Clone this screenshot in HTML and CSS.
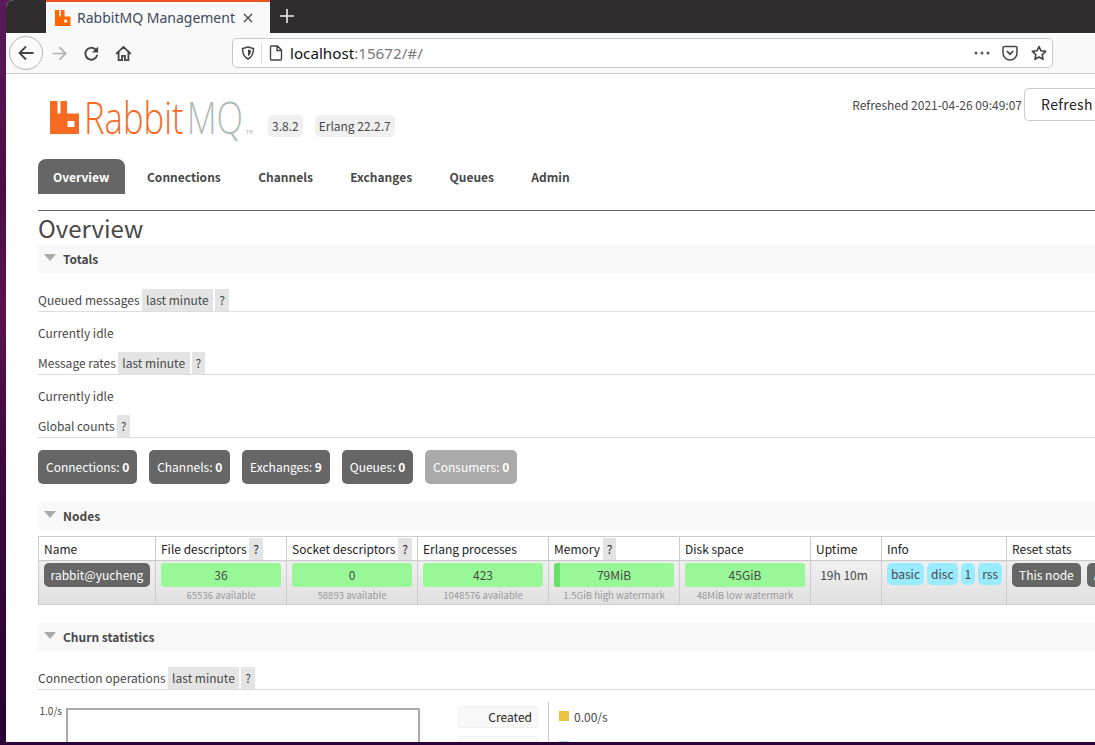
FILE: index.html
```html
<!DOCTYPE html>
<html lang="en">
<head>
<meta charset="utf-8">
<title>RabbitMQ Management</title>
<link rel="stylesheet" href="styles.css">
</head>
<body>
<div class="window">
  <div class="tabbar">
    <div class="tab">
      <svg class="tab-icon" viewBox="0 0 16 16"><path fill="#ff6600" d="M0 0h4.200v6.500h1.600V0H9.600v6.500H15.500V16H0z"/><rect fill="#fff" x="9.200" y="9.600" width="3" height="3" rx=".4"/></svg>
      <span class="tab-title">RabbitMQ Management</span>
      <svg class="tab-close" viewBox="0 0 10 10"><path d="M1 1l8 8M9 1l-8 8" stroke="#4a4a4f" stroke-width="1.400" fill="none"/></svg>
    </div>
    <svg class="tab-new" viewBox="0 0 14 14"><path d="M7 0v14M0 7h14" stroke="#eee" stroke-width="1.600" fill="none"/></svg>
  </div>
  <div class="toolbar">
    <div class="back"><svg viewBox="0 0 18 18"><path d="M16.500 9H2.500M9 2.500L2.500 9l6.500 6.500" stroke="#444" stroke-width="1.800" fill="none"/></svg></div>
    <svg class="tool fwd" viewBox="0 0 18 18"><path d="M1.500 9h14M9 2.500L15.500 9 9 15.500" stroke="#b1b1b3" stroke-width="1.800" fill="none"/></svg>
    <svg class="tool reload" viewBox="0 0 18 18"><path d="M15 10.500A6.300 6.300 0 1 1 13 4.500l2 2" stroke="#444" stroke-width="2" fill="none"/><path d="M16 1.500v6.500h-6.500z" fill="#444"/></svg>
    <svg class="tool home" viewBox="0 0 18 18"><path d="M1.200 9.500L9 2l7.800 7.500M3.800 7.500V16h3.700v-4.500h3V16h3.700V7.500" stroke="#444" stroke-width="1.900" fill="none"/></svg>
    <div class="urlbar">
      <svg class="shield" viewBox="0 0 14 14"><path d="M7 1l5.500 1.500c0 5-1.500 8.500-5.500 10.500C3 11 1.500 7.500 1.500 2.500z" stroke="#444" stroke-width="1.500" fill="none"/><path d="M7 3.500l3 .8c0 3-1 4.700-3 6z" fill="#444"/></svg>
      <span class="url-sep"></span>
      <svg class="page" viewBox="0 0 14 16"><path d="M2 1h6.500L12.500 5v9a1 1 0 0 1-1 1h-9a1 1 0 0 1-1-1V2a1 1 0 0 1 1-1zM8 1v4.500h4.500" stroke="#444" stroke-width="1.400" fill="none"/></svg>
      <span class="url"><span class="host">localhost</span>:15672/#/</span>
      <svg class="url-dots" viewBox="0 0 16 4"><circle cx="2" cy="2" r="1.500" fill="#555"/><circle cx="8" cy="2" r="1.500" fill="#555"/><circle cx="14" cy="2" r="1.500" fill="#555"/></svg>
      <svg class="pocket" viewBox="0 0 16 16"><path d="M2.500 1.500h11A1.500 1.500 0 0 1 15 3v5a7 7 0 0 1-14 0V3a1.500 1.500 0 0 1 1.500-1.500z" stroke="#444" stroke-width="1.500" fill="none"/><path d="M4.800 6l3.200 3.200L11.200 6" stroke="#444" stroke-width="1.700" fill="none"/></svg>
      <svg class="star" viewBox="0 0 16 16"><path d="M8 1.500l2 4.300 4.700.6-3.500 3.200.9 4.700L8 12l-4.100 2.300.9-4.700L1.300 6.400 6 5.800z" stroke="#444" stroke-width="1.600" fill="none" stroke-linejoin="round"/></svg>
    </div>
  </div>
  <div class="page-body">
    <header class="head">
      <div class="logo">
        <svg class="logo-mark" viewBox="0 0 29 33"><path fill="#f76a22" d="M0 0h7.500v12.500h3V0h6.500v12.500H29V33H0z"/><rect fill="#fff" x="17.500" y="20" width="7" height="6" rx="1"/></svg>
        <span class="logo-word"><span class="logo-rabbit">Rabbit</span><span class="logo-mq">MQ</span></span><span class="logo-tm">TM</span>
      </div>
      <div class="versions"><span class="ver">3.8.2</span><span class="ver">Erlang 22.2.7</span></div>
      <div class="refresh"><span class="refreshed">Refreshed 2021-04-26 09:49:07</span><span class="refresh-btn">Refresh</span></div>
    </header>
    <nav class="nav">
      <span class="nav-item active">Overview</span>
      <span class="nav-item">Connections</span>
      <span class="nav-item">Channels</span>
      <span class="nav-item">Exchanges</span>
      <span class="nav-item">Queues</span>
      <span class="nav-item">Admin</span>
    </nav>
    <main class="main">
      <h1 class="title">Overview</h1>
      <section class="totals">
        <h2 class="section"><span class="tri"></span>Totals</h2>
        <div class="sub first"><span>Queued messages</span><span class="chip">last minute</span><span class="chip q">?</span></div>
        <p class="idle">Currently idle</p>
        <div class="sub"><span>Message rates</span><span class="chip">last minute</span><span class="chip q">?</span></div>
        <p class="idle">Currently idle</p>
        <div class="sub"><span>Global counts</span><span class="chip q">?</span></div>
        <div class="counts">
          <span class="count">Connections: <b>0</b></span>
          <span class="count">Channels: <b>0</b></span>
          <span class="count">Exchanges: <b>9</b></span>
          <span class="count">Queues: <b>0</b></span>
          <span class="count light">Consumers: <b>0</b></span>
        </div>
      </section>
      <section class="nodes">
        <h2 class="section"><span class="tri"></span>Nodes</h2>
        <table class="table">
          <thead>
            <tr>
              <th class="c-name">Name</th>
              <th class="c-bar">File descriptors <span class="chip q small">?</span></th>
              <th class="c-bar">Socket descriptors <span class="chip q small">?</span></th>
              <th class="c-bar">Erlang processes</th>
              <th class="c-bar">Memory <span class="chip q small">?</span></th>
              <th class="c-bar">Disk space</th>
              <th class="c-up">Uptime</th>
              <th class="c-info">Info</th>
              <th class="c-reset">Reset stats</th>
            </tr>
          </thead>
          <tbody>
            <tr>
              <td><span class="node">rabbit@yucheng</span></td>
              <td><div class="bar">36</div><div class="bar-sub">65536 available</div></td>
              <td><div class="bar">0</div><div class="bar-sub">58893 available</div></td>
              <td><div class="bar">423</div><div class="bar-sub">1048576 available</div></td>
              <td><div class="bar mem"><span class="mem-fill"></span>79MiB</div><div class="bar-sub">1.5GiB high watermark</div></td>
              <td><div class="bar">45GiB</div><div class="bar-sub">48MiB low watermark</div></td>
              <td class="uptime">19h 10m</td>
              <td class="info"><span class="tag">basic</span><span class="tag">disc</span><span class="tag">1</span><span class="tag">rss</span></td>
              <td class="reset"><span class="reset-btn">This node</span><span class="reset-btn">All nodes</span></td>
            </tr>
          </tbody>
        </table>
      </section>
      <section class="churn">
        <h2 class="section"><span class="tri"></span>Churn statistics</h2>
        <div class="sub first"><span>Connection operations</span><span class="chip">last minute</span><span class="chip q">?</span></div>
        <div class="chart-row">
          <span class="axis">1.0/s</span>
          <div class="plot"></div>
          <div class="legend-keys"><span class="key">Created</span><span class="key">Closed</span></div>
          <div class="legend-vals">
            <div class="val"><span class="sw yellow"></span>0.00/s</div>
            <div class="val"><span class="sw blue"></span>0.00/s</div>
          </div>
        </div>
      </section>
    </main>
  </div>
</div>
</body>
</html>
```
FILE: styles.css
```css
* { box-sizing: border-box; }
html, body { margin: 0; padding: 0; height: 745px; overflow: hidden; }
body {
  background: linear-gradient(180deg, #5a1a58 0%, #4c0d49 25%, #5c134f 42%, #42083f 60%, #2c0136 95%);
  font-family: "Noto Sans CJK SC", "Noto Sans", sans-serif;
  color: #484848;
}
.window { margin-left: 6px; width: 1089px; height: 742px; overflow: hidden; display: flex; flex-direction: column; background: #fff; border-top-left-radius: 8px; }
.tabbar { height: 33px; background: #2f2d2d; display: flex; align-items: flex-start; padding-left: 40px; flex: none; }
.tab { width: 224px; height: 33px; background: #f9f9fa; border-top: 2px solid #e95420; display: flex; align-items: center; padding: 0 0 0 9px; }
.tab-icon { width: 16px; height: 16px; margin-right: 6px; }
.tab-title { font-family: "Noto Sans", sans-serif; font-size: 14px; color: #3d4a5c; width: 160px; white-space: nowrap; }
.tab-close { width: 10px; height: 10px; margin-left: 6px; }
.tab-new { width: 14px; height: 14px; margin: 9px 0 0 10px; }
.toolbar { height: 41px; background: #f9f9fa; border-bottom: 1px solid #ccc; display: flex; align-items: center; flex: none; padding-left: 3px; }
.back { width: 34px; height: 34px; border: 1px solid #b5b5b5; border-radius: 50%; background: #fbfbfb; display: flex; align-items: center; justify-content: center; margin-right: 8px; }
.back svg { width: 18px; height: 18px; }
.tool { width: 17px; height: 17px; flex: none; }
.fwd { margin-right: 15px; }
.reload { margin-right: 15px; }
.home { margin-right: 100px; }
.urlbar { width: 821px; height: 30px; background: #fff; border: 1px solid #c8c8c8; border-radius: 5px; display: flex; align-items: center; padding-left: 8px; }
.shield { width: 14px; height: 14px; margin-right: 6px; flex: none; }
.url-sep { width: 1px; height: 22px; background: #ddd; margin-right: 7px; flex: none; }
.page { width: 14px; height: 16px; margin-right: 7px; flex: none; }
.url { font-family: "Noto Sans", sans-serif; font-size: 15.200px; color: #7a7a7a; width: 684px; white-space: nowrap; flex: none; }
.host { color: #111; }
.url-dots { width: 16px; height: 4px; margin-right: 12px; flex: none; }
.pocket { width: 16px; height: 16px; margin-right: 13px; flex: none; }
.star { width: 16px; height: 16px; flex: none; }
.page-body { flex: 1; padding: 0 0 0 32px; overflow: hidden; font-size: 12px; }
.head { height: 85px; position: relative; display: flex; }
.logo { display: flex; align-items: flex-end; height: 60px; padding: 0 0 0 12px; color: #f76a22; line-height: 1; width: 230px; flex: none; }
.logo-mark { width: 29px; height: 33px; margin-right: 5px; flex: none; }
.logo-word { display: inline-block; width: 158px; height: 37px; transform: scaleX(.77); transform-origin: left bottom; white-space: nowrap; font-family: "Open Sans", sans-serif; font-weight: 300; font-size: 45px; line-height: 37px; margin-bottom: -1px; }
.logo-mq { color: #aebcb4; margin-left: 4px; }
.logo-tm { font-size: 5px; color: #aaa; margin-left: 4px; }
.versions { display: flex; gap: 12px; margin-top: 41px; height: 22px; }
.ver { background: #f0f0f0; border-radius: 5px; padding: 0 4px; font-size: 12px; line-height: 22px; white-space: nowrap; }
.refresh { position: absolute; right: 0; top: 14px; display: flex; align-items: center; }
.refreshed { font-size: 12px; margin-right: 2px; }
.refresh-btn { width: 71px; height: 33px; border: 1px solid #ccc; border-right: 0; border-radius: 5px 0 0 5px; font-size: 14px; color: #222; line-height: 31px; padding-left: 16px; letter-spacing: .4px; white-space: nowrap; }
.nav { height: 52px; border-bottom: 1px solid #666; display: flex; }
.nav-item { height: 35px; padding: 0 15px; margin-right: 7.400px; font-weight: 700; font-size: 12px; line-height: 35px; color: #484848; }
.nav-item.active { background: #666; color: #fff; border-radius: 8px 8px 0 0; width: 87px; margin-right: 7px; }
.main { width: 1057px; }
.title { font-size: 24px; font-weight: 400; margin: 0; height: 34px; line-height: 34px; color: #484848; }
.section { height: 28px; margin: 0; background: #f8f8f8; font-size: 12px; font-weight: 700; line-height: 28px; display: flex; align-items: center; }
.tri { width: 0; height: 0; border: 6px solid transparent; border-top: 7px solid #aaa; border-bottom: 0; margin: 0 7px 4px 6px; }
.sub { display: flex; height: 28px; border-bottom: 1px solid #ddd; align-items: flex-end; line-height: 22px; margin-top: 1px; }
.sub.first { margin-top: 11px; }
.chip { background: #e4e4e4; padding: 0 4.500px; margin-left: 2px; height: 22px; font-size: 12px; }
.chip.q { padding: 0 4px; }
.idle { margin: 0; height: 34px; padding-top: 12px; line-height: 18px; }
.counts { display: flex; gap: 11.800px; margin-top: 12px; }
.count { height: 34px; background: #666; color: #fff; border-radius: 5px; line-height: 34px; padding: 0 8px; white-space: nowrap; }
.count.light { background: #aaa; }
.nodes { margin-top: 18px; }
.table { border-collapse: collapse; margin-top: 6px; width: 1100px; table-layout: fixed; border: 1px solid #ccc; font-size: 12px; }
.table th { font-weight: 400; text-align: left; height: 24px; line-height: 22px; padding: 0 5px; border: 1px solid #ccc; white-space: nowrap; color: #222; }
.table td { vertical-align: top; padding: 2px 5px 0; height: 44px; border: 1px solid #ccc; background: linear-gradient(#f0f0f0, #e0e0e0); text-align: center; white-space: nowrap; }
.c-name { width: 117px; }
.c-bar { width: 131px; }
.c-up { width: 71px; }
.c-info { width: 125px; }
.c-reset { width: 200px; }
.chip.small { display: inline-block; margin-left: 0; line-height: 22px; height: 22px; vertical-align: top; }
.node { display: block; background: #666; color: #fff; border-radius: 5px; height: 24px; line-height: 24px; }
.bar { height: 24px; background: #98f898; border-radius: 3px; line-height: 24px; position: relative; color: #484848; }
.mem-fill { position: absolute; left: 0; top: 0; width: 6px; height: 24px; background: #66e066; border-radius: 3px 0 0 3px; }
.bar-sub { font-size: 9.600px; color: #999; line-height: 15px; margin-top: 1px; }
.table .uptime { padding: 5px 9px 0 5px; }
.table .info { text-align: left; }
.tag { display: inline-block; background: #99ebff; border-radius: 5px; height: 22px; line-height: 22px; padding: 0 4px; margin-right: 3px; }
.table .reset { text-align: left; }
.reset-btn { display: inline-block; background: #666; color: #fff; border-radius: 5px; height: 24px; line-height: 24px; padding: 0 7px; margin-right: 6px; }
.churn { margin-top: 18px; }
.chart-row { display: flex; margin-top: 18px; height: 60px; }
.axis { font-size: 10px; width: 28px; text-align: right; line-height: 14px; padding-right: 4px; white-space: nowrap; margin-top: -4px; }
.plot { width: 354px; height: 60px; border: 2px solid #aaa; border-bottom: 0; flex: none; }
.legend-keys { width: 80px; margin-left: 38px; display: flex; flex-direction: column; gap: 8px; margin-top: -2px; flex: none; }
.key { height: 22px; background: #f8f8f8; border: 1px solid #efefef; border-radius: 3px; text-align: right; line-height: 20px; padding-right: 5px; color: #222; flex: none; }
.legend-vals { margin-left: 10px; border-left: 1px solid #ccc; padding-left: 10px; margin-top: -6px; height: 60px; }
.val { display: flex; align-items: center; height: 20px; gap: 5px; margin-top: 4px; margin-bottom: 10px; }
.sw { width: 10px; height: 10px; }
.yellow { background: #edc240; }
.blue { background: #afd8f8; }
```
